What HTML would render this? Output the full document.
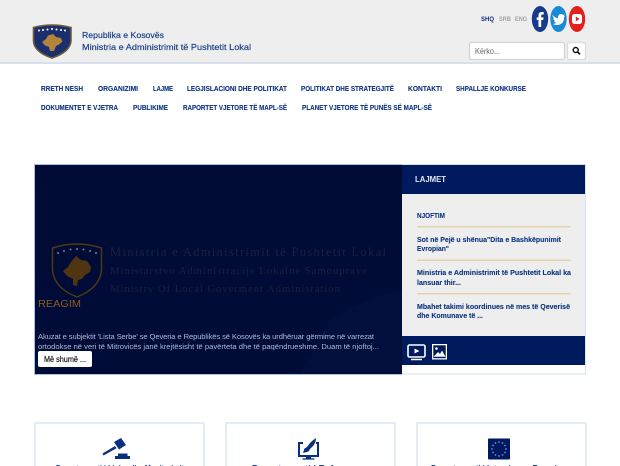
<!DOCTYPE html>
<html lang="sq">
<head>
<meta charset="utf-8">
<title>Ministria e Administrimit të Pushtetit Lokal</title>
<style>
html,body{margin:0;padding:0;background:#fff;width:620px;height:466px;overflow:hidden}
svg{display:block;position:absolute;left:0;top:0}
text{font-family:"Liberation Sans",sans-serif}
.nav{font-size:7.6px;font-weight:700;fill:#0c3480;stroke:#0c3480;stroke-width:.12px}
.pn{font-size:7.7px;font-weight:700;fill:#0c3480;stroke:#0c3480;stroke-width:.1px}
.ds{font-size:7.6px;fill:#aeb9d8}
.sr{font-family:"Liberation Serif",serif;fill:#192140}
.bt{font-size:8px;font-weight:700;fill:#0c3480}
</style>
</head>
<body>
<svg width="620" height="466" viewBox="0 0 620 466" xmlns="http://www.w3.org/2000/svg">
<defs>
<linearGradient id="hero" x1="0" y1="0" x2="0" y2="1">
<stop offset="0" stop-color="#000b35"/><stop offset="1" stop-color="#000c38"/>
</linearGradient>
</defs>
<!-- header -->
<rect x="0" y="0" width="620" height="62" fill="#eeeeee"/>
<rect x="0" y="62" width="620" height="2" fill="#d7e1ec"/>
<!-- logo -->
<path d="M33.500 27.500 Q52 22.500 71 27.500 L71 41 Q70 52 52 58 Q34 52 33.500 41 Z" fill="#1b2f6e" stroke="#6f5a3a" stroke-width="1.600"/>
<g fill="#fff"><circle cx="39" cy="30.500" r="1"/><circle cx="43" cy="30" r="1"/><circle cx="47.500" cy="29.500" r="1"/><circle cx="52" cy="29" r="1"/><circle cx="56.500" cy="29.500" r="1"/><circle cx="61" cy="30" r="1"/><circle cx="65" cy="30.500" r="1"/></g>
<path d="M42 42 L46 39 L48 35.500 L53 34 L56 37 L61 38 L62.500 41.500 L59 44.500 L56 46 L54 51 L50 51 L49 47 L45 45.500 Z" fill="#b5843c"/>
<text x="82" y="38" font-size="8.300" fill="#194088" stroke="#194088" stroke-width=".18" textLength="82" lengthAdjust="spacingAndGlyphs">Republika e Kosovës</text>
<text x="82" y="50" font-size="8.300" fill="#194088" stroke="#194088" stroke-width=".18" textLength="169" lengthAdjust="spacingAndGlyphs">Ministria e Administrimit të Pushtetit Lokal</text>
<!-- lang -->
<text x="481" y="21" font-size="6.800" font-weight="700" fill="#0c2f7c" textLength="13" lengthAdjust="spacingAndGlyphs">SHQ</text>
<text x="499" y="21" font-size="6.800" font-weight="700" fill="#a2a2a2" textLength="12" lengthAdjust="spacingAndGlyphs">SRB</text>
<text x="515" y="21" font-size="6.800" font-weight="700" fill="#a2a2a2" textLength="12" lengthAdjust="spacingAndGlyphs">ENG</text>
<!-- social -->
<ellipse cx="540" cy="19" rx="8.200" ry="13" fill="#163a8c"/>
<path d="M541.200 27 V20 H543.200 L543.600 17.400 H541.200 V15.700 Q541.200 14.500 542.400 14.500 H543.700 V12 H541.700 Q538.500 12 538.500 15.300 V17.400 H536.700 V20 H538.500 V27 Z" fill="#fff"/>
<ellipse cx="558.500" cy="19" rx="8.200" ry="13" fill="#1a8ad6"/>
<path d="M552.500 15 Q555 18 558 18 Q558 14 561 14 Q562.500 14 563 15 L564.800 14.500 L563.800 16.200 L565 16 L564 17.500 Q564 24 558 25 Q555 25.300 552.800 24 Q555 24 556.500 22.800 Q554.500 22.500 554 21 H555.200 Q553.200 20 553.200 18 L554.500 18.400 Q552.500 17 552.500 15 Z" fill="#fff"/>
<ellipse cx="577" cy="19" rx="8.200" ry="13" fill="#e4201c"/>
<rect x="572" y="14" width="10" height="10" rx="2.500" fill="#fff"/>
<path d="M575.800 16.500 L579.500 19 L575.800 21.500 Z" fill="#e4201c"/>
<!-- search -->
<rect x="469.500" y="42.500" width="95" height="17" rx="2" fill="#fff" stroke="#d4d4d4" stroke-width="1.300"/>
<text x="475" y="54" font-size="7.800" fill="#666" textLength="25" lengthAdjust="spacingAndGlyphs">Kërko...</text>
<rect x="567.500" y="42.500" width="18" height="17" rx="2" fill="#fff" stroke="#dcdcdc" stroke-width="1.300"/>
<circle cx="575.700" cy="50" r="2.500" fill="none" stroke="#111" stroke-width="1.400"/>
<path d="M577.600 52 L580 54.300" stroke="#111" stroke-width="1.700"/>
<!-- nav -->
<g class="nav">
<text x="41" y="91" textLength="42" lengthAdjust="spacingAndGlyphs">RRETH NESH</text>
<text x="98" y="91" textLength="40" lengthAdjust="spacingAndGlyphs">ORGANIZIMI</text>
<text x="153" y="91" textLength="20" lengthAdjust="spacingAndGlyphs">LAJME</text>
<text x="187" y="91" textLength="100" lengthAdjust="spacingAndGlyphs">LEGJISLACIONI DHE POLITIKAT</text>
<text x="301" y="91" textLength="93" lengthAdjust="spacingAndGlyphs">POLITIKAT DHE STRATEGJITË</text>
<text x="408" y="91" textLength="34" lengthAdjust="spacingAndGlyphs">KONTAKTI</text>
<text x="456" y="91" textLength="70" lengthAdjust="spacingAndGlyphs">SHPALLJE KONKURSE</text>
<text x="41" y="110" textLength="77" lengthAdjust="spacingAndGlyphs">DOKUMENTET E VJETRA</text>
<text x="133" y="110" textLength="35" lengthAdjust="spacingAndGlyphs">PUBLIKIME</text>
<text x="183" y="110" textLength="104" lengthAdjust="spacingAndGlyphs">RAPORTET VJETORE TË MAPL-SË</text>
<text x="302" y="110" textLength="130" lengthAdjust="spacingAndGlyphs">PLANET VJETORE TË PUNËS SË MAPL-SË</text>
</g>
<!-- hero -->
<rect x="34" y="164" width="368" height="210" fill="url(#hero)"/>
<path d="M34.500 374 V164.500 H402" fill="none" stroke="#a9c0e2" stroke-width="1"/>
<path d="M34 374.500 H402" stroke="#a9c0e2" stroke-width="1"/>
<path d="M330 320 Q370 295 402 290 V374 H300 Z" fill="#03113f" opacity=".6"/>
<path d="M52.500 248 Q77 240 101.500 248 L101.500 270 Q100 288 77 297 Q54 288 52.500 270 Z" fill="none" stroke="#4f3814" stroke-width="1.500"/>
<g fill="#7d7f8c"><circle cx="58" cy="253" r="1"/><circle cx="64" cy="251" r="1"/><circle cx="70.500" cy="249.500" r="1"/><circle cx="77" cy="249" r="1"/><circle cx="83.500" cy="249.500" r="1"/><circle cx="90" cy="251" r="1"/><circle cx="96" cy="253" r="1"/></g>
<path d="M63 271 L68 267 L71 262 L76 256 L81 260 L87 261 L91 267 L90 272 L85 275 L82 279 L78 280 L77 286 L73 285 L73 279 L67 276 Z" fill="#4f3512"/>
<text x="38" y="307" font-size="10.500" fill="#8c5c1a" textLength="43" lengthAdjust="spacingAndGlyphs">REAGIM</text>
<text class="sr" x="110" y="256" font-size="12.500" textLength="276" lengthAdjust="spacing">Ministria e Administrimit të Pushtetit Lokal</text>
<text class="sr" x="110" y="274" font-size="10.800" textLength="257" lengthAdjust="spacing">Ministarstvo Administracije Lokalne Samouprave</text>
<text class="sr" x="110" y="292" font-size="10.800" textLength="230" lengthAdjust="spacing">Ministry Of Local Goverment Adminisration</text>
<text class="ds" x="38" y="339" textLength="336" lengthAdjust="spacing">Akuzat e subjektit 'Lista Serbe' se Qeveria e Republikës së Kosovës ka urdhëruar gërmime në varrezat</text>
<text class="ds" x="38" y="349" textLength="341" lengthAdjust="spacing">ortodokse në veri të Mitrovicës janë krejtësisht të pavërteta dhe të paqëndrueshme. Duam të njoftoj...</text>
<rect x="38" y="351" width="54" height="16" rx="2" fill="#fff"/>
<text x="44" y="362" font-size="7.800" fill="#111" stroke="#111" stroke-width=".18" textLength="42" lengthAdjust="spacingAndGlyphs">Më shumë ...</text>
<!-- panel -->
<rect x="402" y="164" width="184" height="210" fill="#fff"/>
<rect x="402" y="194" width="184" height="142" fill="#eeeeee"/>
<rect x="402" y="164" width="184" height="30" fill="#001a5e"/>
<rect x="402" y="336" width="184" height="29" fill="#001a5e"/>
<path d="M402 164.500 H585.500 V374 H402" fill="none" stroke="#d5e1f0" stroke-width="1"/>
<text x="415" y="182" font-size="8.500" font-weight="700" fill="#dfe6f2" textLength="31" lengthAdjust="spacingAndGlyphs">LAJMET</text>
<g class="pn">
<text x="417" y="218" textLength="28" lengthAdjust="spacingAndGlyphs">NJOFTIM</text>
<text x="417" y="242" textLength="144" lengthAdjust="spacingAndGlyphs">Sot në Pejë u shënua"Dita e Bashkëpunimit</text>
<text x="417" y="251" textLength="32" lengthAdjust="spacingAndGlyphs">Evropian"</text>
<text x="417" y="275" textLength="154" lengthAdjust="spacingAndGlyphs">Ministria e Administrimit të Pushtetit Lokal ka</text>
<text x="417" y="285" textLength="44" lengthAdjust="spacingAndGlyphs">lansuar thir...</text>
<text x="417" y="309" textLength="153" lengthAdjust="spacingAndGlyphs">Mbahet takimi koordinues në mes të Qeverisë</text>
<text x="417" y="318" textLength="66" lengthAdjust="spacingAndGlyphs">dhe Komunave të ...</text>
</g>
<rect x="417" y="226" width="154" height="1.500" fill="#e5d2ab"/>
<rect x="417" y="259.500" width="154" height="1.500" fill="#e5d2ab"/>
<rect x="417" y="293" width="154" height="1.500" fill="#e5d2ab"/>
<!-- media icons -->
<rect x="408" y="345" width="17" height="12" rx="1.500" fill="none" stroke="#fff" stroke-width="1.600"/>
<path d="M414.500 348.500 L419.500 351 L414.500 353.500 Z" fill="#fff"/>
<path d="M411 359.500 H422" stroke="#fff" stroke-width="1.500"/>
<rect x="432" y="344" width="15" height="15.500" fill="#fff"/>
<rect x="433.300" y="345.300" width="12.400" height="12.900" fill="#001a5e"/>
<circle cx="436.500" cy="348.500" r="1.300" fill="#fff"/>
<path d="M433.500 356.800 L438 352 L440 354 L442 350.500 L445.500 356.800 Z" fill="#fff"/>
<!-- cards -->
<rect x="35" y="423" width="169" height="60" fill="#fff" stroke="#dce6f3" stroke-width="1.500"/>
<rect x="226" y="423" width="169" height="60" fill="#fff" stroke="#dce6f3" stroke-width="1.500"/>
<rect x="417" y="423" width="169" height="60" fill="#fff" stroke="#dce6f3" stroke-width="1.500"/>
<!-- gavel -->
<g fill="#0b2f80">
<path d="M114 442 L121 438 L126 445 L119 449.500 Z"/>
<path d="M103.500 455.500 L102.500 453.500 L115 446 L116.500 448.300 Z"/>
<rect x="118" y="453.500" width="9.500" height="2.500"/>
<rect x="115" y="456" width="15" height="3"/>
</g>
<!-- monitor rocket -->
<path d="M303 443 H299 V456 H318 V443 H316" fill="none" stroke="#0b2f80" stroke-width="2"/>
<path d="M303 453 L304.500 448.500 L307 447 L310 443 Q313 440 316 438 Q316 442 313.500 445.500 L310 449 L308.500 451.500 Z" fill="#0b2f80"/>
<rect x="306" y="457" width="5" height="1.500" fill="#0b2f80"/>
<rect x="302.500" y="458.300" width="12" height="1.300" fill="#0b2f80"/>
<!-- EU -->
<rect x="488" y="438.500" width="22" height="21" rx="1" fill="#00195f"/>
<g fill="#6f89c9"><circle cx="499" cy="442" r=".9"/><circle cx="502.500" cy="443" r=".9"/><circle cx="505" cy="445.500" r=".9"/><circle cx="506" cy="449" r=".9"/><circle cx="505" cy="452.500" r=".9"/><circle cx="502.500" cy="455" r=".9"/><circle cx="499" cy="456" r=".9"/><circle cx="495.500" cy="455" r=".9"/><circle cx="493" cy="452.500" r=".9"/><circle cx="492" cy="449" r=".9"/><circle cx="493" cy="445.500" r=".9"/><circle cx="495.500" cy="443" r=".9"/></g>
<!-- card text cropped -->
<text class="bt" x="56" y="471" textLength="128" lengthAdjust="spacingAndGlyphs">Departamenti i Ligjor dhe Monitorimit</text>
<text class="bt" x="252" y="471" textLength="114" lengthAdjust="spacingAndGlyphs">Departamenti i Reformave</text>
<text class="bt" x="431" y="471" textLength="139" lengthAdjust="spacingAndGlyphs">Departamenti i Integrimeve Evropiane</text>
</svg>
</body>
</html>
